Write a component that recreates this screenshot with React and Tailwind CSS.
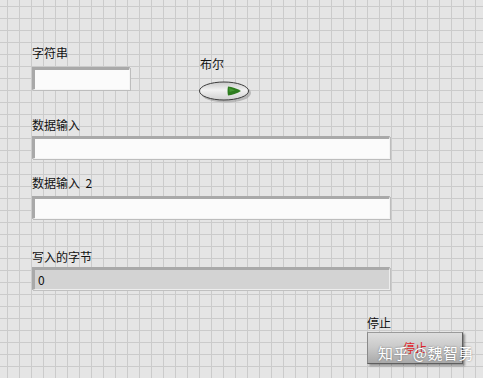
import React from 'react';

const font = { fontFamily: '"Noto Sans CJK SC", "Noto Sans", sans-serif' };

const Label = ({ children, className = '' }) => (
  <div className={`text-[12px] leading-[16px] text-[#111] ${className}`}>{children}</div>
);

// LabVIEW-style recessed string control
const StringBox = ({ className = '' }) => (
  <div
    className={`h-[23px] bg-[#fbfbfb] border-l-[3px] border-t-[3px] border-[#a9a9a9] border-r border-b border-r-[#f4f4f4] border-b-[#f4f4f4] shadow-[1px_1px_0_#bdbdbd] ${className}`}
  />
);

const BoolSwitch = () => (
  <svg width="56" height="24" viewBox="0 0 56 24">
    <defs>
      <linearGradient id="sw" x1="0" y1="0" x2="0" y2="1">
        <stop offset="0" stopColor="#c9c9c9" />
        <stop offset="0.45" stopColor="#f2f2f2" />
        <stop offset="1" stopColor="#d0d0d0" />
      </linearGradient>
    </defs>
    <ellipse cx="27" cy="12" rx="25" ry="9.5" fill="#9a9a9a" opacity="0.6" />
    <ellipse cx="25" cy="10" rx="24.5" ry="9" fill="url(#sw)" stroke="#3c3c3c" strokeWidth="1" />
    <path d="M29 5.5 C28.4 8 28.4 12 29 14.5 C33 14 38 12.5 42 10 C38 7.5 33 6 29 5.5 Z" fill="#2e7d1f" />
    <path d="M30 7 C32 7.5 34 8.3 36 9.5 C34 10 32 10.6 30.5 11 Z" fill="#4fa33a" opacity="0.7" />
  </svg>
);

export default function App() {
  return (
    <div
      style={font}
      className="relative w-[483px] h-[378px] overflow-hidden bg-[#e5e5e5] bg-[linear-gradient(to_right,#cbcbcb_1px,transparent_1px),linear-gradient(to_bottom,#cbcbcb_1px,transparent_1px)] bg-size-[12px_12px] bg-position-[7px_6px]"
    >
      <div className="flex flex-col pl-[32px] pt-[45px]">
        <div className="flex items-start h-[60px]">
          <div className="flex flex-col">
            <Label>字符串</Label>
            <StringBox className="mt-[6px] w-[98px]" />
          </div>
          <div className="flex flex-col ml-[70px] mt-[11px]">
            <Label>布尔</Label>
            <div className="mt-[9px] -ml-[1px]">
              <BoolSwitch />
            </div>
          </div>
        </div>

        <Label className="mt-[12px]">数据输入</Label>
        <StringBox className="mt-[3px] w-[358px]" />

        <Label className="mt-[16px]">数据输入&nbsp; 2</Label>
        <StringBox className="mt-[5px] w-[358px]" />

        <Label className="mt-[30px]">写入的字节</Label>
        <div className="mt-[2px] w-[358px] h-[23px] bg-[#d3d3d3] border-l-[3px] border-t-[3px] border-[#a9a9a9] border-r border-b border-r-[#ededed] border-b-[#ededed] shadow-[1px_1px_0_#c0c0c0] flex items-center pl-[3px] text-[12px] text-[#111]">
          0
        </div>

        <Label className="mt-[25px] ml-[335px]">停止</Label>
        <button className="mt-[1px] ml-[335px] w-[96px] h-[32px] border border-[#5e5e5e] border-l-[#8a8a8a] border-t-[#9a9a9a] bg-gradient-to-b from-[#dedede] via-[#c8c8c8] to-[#a9a9a9] shadow-[2px_2px_2px_rgba(0,0,0,0.35)] flex items-center justify-center text-[12px] text-[#e0242a]">
          停止
        </button>
      </div>

      {/* watermark over the stop button */}
      <div className="absolute left-[378px] top-[343px] text-[15px] leading-[20px] tracking-[0.5px] text-white whitespace-nowrap [text-shadow:0_0_2px_rgba(0,0,0,0.45)]">
        知乎 @魏智勇
      </div>
    </div>
  );
}
